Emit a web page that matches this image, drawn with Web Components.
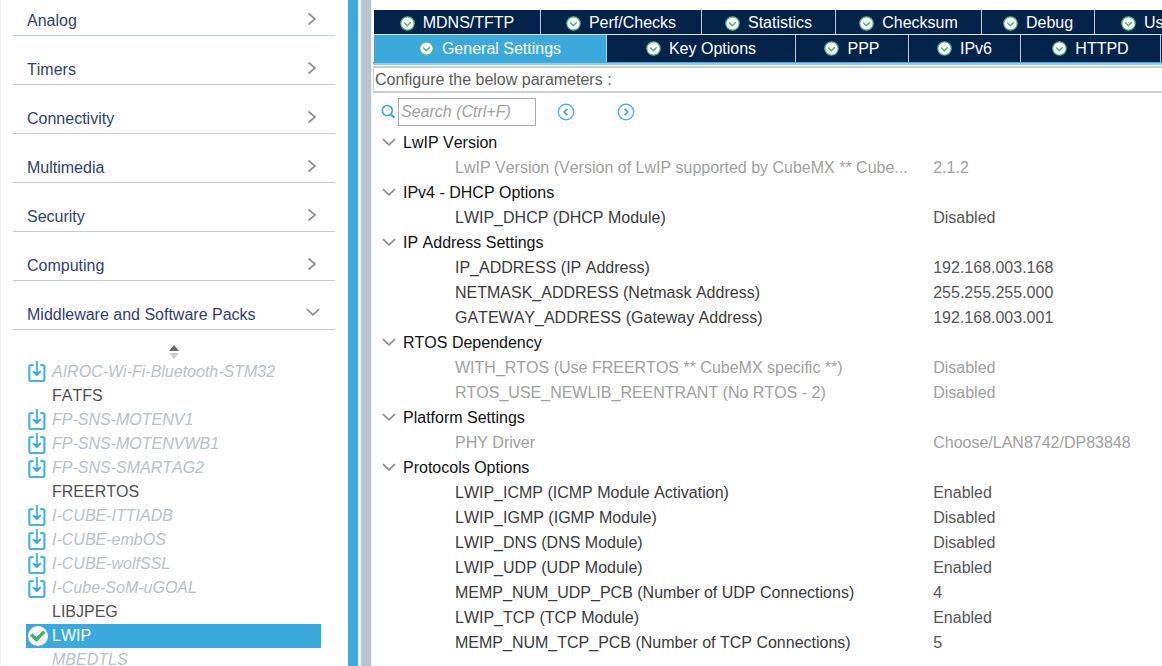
<!DOCTYPE html>
<html lang="en">
<head>
<meta charset="utf-8">
<title>LWIP configuration</title>
<style>
  html, body { margin: 0; height: 100%; }
  body { background: #fff; font: 16px/20px "Liberation Sans", Arial, sans-serif; font-kerning: none; overflow: hidden; }
</style>
</head>
<body>
<mx-workbench>
  <mx-sidebar slot="sidebar">
    <mx-category>Analog</mx-category>
    <mx-category>Timers</mx-category>
    <mx-category>Connectivity</mx-category>
    <mx-category>Multimedia</mx-category>
    <mx-category>Security</mx-category>
    <mx-category>Computing</mx-category>
    <mx-category open>Middleware and Software Packs</mx-category>
    <mx-pack-list slot="packs">
      <mx-pack state="install">AIROC-Wi-Fi-Bluetooth-STM32</mx-pack>
      <mx-pack>FATFS</mx-pack>
      <mx-pack state="install">FP-SNS-MOTENV1</mx-pack>
      <mx-pack state="install">FP-SNS-MOTENVWB1</mx-pack>
      <mx-pack state="install">FP-SNS-SMARTAG2</mx-pack>
      <mx-pack>FREERTOS</mx-pack>
      <mx-pack state="install">I-CUBE-ITTIADB</mx-pack>
      <mx-pack state="install">I-CUBE-embOS</mx-pack>
      <mx-pack state="install">I-CUBE-wolfSSL</mx-pack>
      <mx-pack state="install">I-Cube-SoM-uGOAL</mx-pack>
      <mx-pack>LIBJPEG</mx-pack>
      <mx-pack state="selected">LWIP</mx-pack>
      <mx-pack state="unavailable">MBEDTLS</mx-pack>
    </mx-pack-list>
  </mx-sidebar>

  <mx-tabs>
    <mx-tab slot="back">MDNS/TFTP</mx-tab>
    <mx-tab slot="back">Perf/Checks</mx-tab>
    <mx-tab slot="back">Statistics</mx-tab>
    <mx-tab slot="back">Checksum</mx-tab>
    <mx-tab slot="back">Debug</mx-tab>
    <mx-tab slot="back" clipped>Us</mx-tab>
    <mx-tab slot="front" active>General Settings</mx-tab>
    <mx-tab slot="front">Key Options</mx-tab>
    <mx-tab slot="front">PPP</mx-tab>
    <mx-tab slot="front">IPv6</mx-tab>
    <mx-tab slot="front">HTTPD</mx-tab>
  </mx-tabs>
  <mx-caption>Configure the below parameters :</mx-caption>
  <mx-search></mx-search>
  <mx-parameters></mx-parameters>
</mx-workbench>

<script>
const ICONS = {
  right: `<svg width="10" height="14" viewBox="0 0 10 14"><path d="M1.5 1.5 8 7 1.5 12.5" fill="none" stroke="#8f8f8f" stroke-width="1.7"/></svg>`,
  down: `<svg width="14" height="9" viewBox="0 0 14 9"><path d="M1 1.2 7 6.8 13 1.2" fill="none" stroke="#8f8f8f" stroke-width="1.7"/></svg>`,
  install: `<svg width="18" height="22" viewBox="0 0 18 22"><path d="M5.5 4.2H3Q1.3 4.2 1.3 5.9V18.3Q1.3 20 3 20H14.7Q16.4 20 16.4 18.3V5.9Q16.4 4.2 14.7 4.2H12.2" fill="none" stroke="#4bb3df" stroke-width="2.2"/><path d="M8.8 0V14" fill="none" stroke="#5cbbe3" stroke-width="2.2"/><path d="M4.6 9.6 8.8 11.4 13 9.6V11L8.8 15.4 4.6 11Z" fill="#35a6d9"/></svg>`,
  selected: `<svg width="20" height="20" viewBox="0 0 20 20"><circle cx="10" cy="10" r="10" fill="#fff"/><path d="M3.2 8.6 8.4 13.6 16.2 5.6" fill="none" stroke="#45aa6a" stroke-width="3.4"/></svg>`,
  check: `<svg width="15" height="15" viewBox="0 0 15 15"><circle cx="7.5" cy="7.5" r="6.7" fill="#fff" stroke="#4fb477" stroke-width="1.2"/><path d="M4.2 6.5 7.3 9.7 10.8 6.3" fill="none" stroke="#4fb477" stroke-width="1.6"/></svg>`,
  sort: `<svg width="12" height="14" viewBox="0 0 12 14"><path d="M6 0 11 6H1Z" fill="#6a6a6a"/><path d="M1 8H11L6 14Z" fill="#d0d0d0"/></svg>`,
  search: `<svg width="15" height="15" viewBox="0 0 15 15"><circle cx="6.3" cy="6.5" r="5" fill="none" stroke="#3ba9dc" stroke-width="1.7"/><path d="M9.8 10.4 13.4 13.7" stroke="#3ba9dc" stroke-width="2.2"/></svg>`,
  previous: `<svg width="18" height="18" viewBox="0 0 18 18"><circle cx="9" cy="9" r="7.7" fill="none" stroke="#4eb4e2" stroke-width="1.4"/><path d="M10.4 5.8 7 9 10.4 12.2" fill="none" stroke="#3ba9dc" stroke-width="1.6"/></svg>`,
  next: `<svg width="18" height="18" viewBox="0 0 18 18"><circle cx="9" cy="9" r="7.7" fill="none" stroke="#4eb4e2" stroke-width="1.4"/><path d="M7.6 5.8 11 9 7.6 12.2" fill="none" stroke="#3ba9dc" stroke-width="1.6"/></svg>`
};

const BASE = `<style>
  :host, * { box-sizing: border-box; }
  svg { display: block; flex: none; }
  button { font: inherit; color: inherit; font-kerning: none; background: none; border: 0; padding: 0; margin: 0; text-align: left; }
</style>`;

class MxElement extends HTMLElement {
  constructor() {
    super();
    this.attachShadow({ mode: "open" });
  }
  connectedCallback() {
    this.shadowRoot.innerHTML = BASE + this.view();
  }
}

customElements.define("mx-workbench", class extends MxElement {
  view() {
    return `<style>
      :host { display: grid; grid-template-columns: 348px 10px 3px 10px minmax(0, 1fr); height: 100vh; overflow: hidden; }
      aside, main { min-width: 0; min-height: 0; overflow: hidden; }
      aside { border-left: 1px solid #f0f3f5; }
      .accent { background: #3ba9dc; }
      .gap { background: #f3f3f3; }
      .divider { background: #b9c5cb; }
      main { border-left: 1px solid #eef1f2; padding: 10px 0 0 1px; }
    </style>
    <aside><slot name="sidebar"></slot></aside>
    <div class="accent"></div><div class="gap"></div><div class="divider"></div>
    <main><slot></slot></main>`;
  }
});

customElements.define("mx-sidebar", class extends MxElement {
  view() {
    return `<style>
      :host { display: block; }
      nav { display: grid; gap: 13px; padding: 0 13px 0 12px; }
    </style>
    <nav aria-label="Categories"><slot></slot></nav>
    <slot name="packs"></slot>`;
  }
});

customElements.define("mx-category", class extends MxElement {
  view() {
    const open = this.hasAttribute("open");
    return `<style>
      :host { display: block; color: #2f3f6d; }
      button { display: flex; align-items: center; justify-content: space-between; width: 100%; height: 36px; padding: 6px 18px 0 14px; border-bottom: 1px solid #bfccd8; }
      .icon { display: grid; place-items: center; width: 10px; height: 24px; padding-bottom: 4px; }
      :host([open]) .icon { width: 14px; }
      :host([open]) button { padding-right: 15px; }
    </style>
    <button type="button" aria-expanded="${open}"><span><slot></slot></span><span class="icon">${open ? ICONS.down : ICONS.right}</span></button>`;
  }
});

customElements.define("mx-pack-list", class extends MxElement {
  view() {
    return `<style>
      :host { display: block; padding: 13px 27px 0 25px; }
      .sort { display: grid; place-items: center; width: 100%; height: 17px; }
    </style>
    <button class="sort" type="button" aria-label="Sort packs">${ICONS.sort}</button>
    <slot></slot>`;
  }
});

customElements.define("mx-pack", class extends MxElement {
  view() {
    return `<style>
      :host { display: block; color: #505050; }
      :host([state="install"]), :host([state="unavailable"]) { color: #b7c1c8; font-style: italic; }
      :host([state="selected"]) { background: #3ba9dc; color: #fff; }
      button { display: grid; grid-template-columns: 24px minmax(0, 1fr); align-items: center; width: 100%; height: 24px; padding-left: 2px; white-space: nowrap; }
    </style>
    <button type="button"><span>${ICONS[this.getAttribute("state")] || ""}</span><span><slot></slot></span></button>`;
  }
});

customElements.define("mx-tabs", class extends MxElement {
  view() {
    return `<style>
      :host { display: block; border-bottom: 2px solid #8fd0f0; }
      .row { display: grid; margin-left: 1px; background: #03234b; }
      .back { grid-template-columns: 167fr 161fr 134fr 146fr 113fr 67fr; grid-auto-rows: 24px; border-bottom: 1px solid #dfe4ea; }
      .front { grid-template-columns: 233fr 189fr 113fr 112fr 140fr 1fr; grid-auto-rows: 27px; }
      .line { height: 1px; background: #3ba9dc; }
    </style>
    <div role="tablist">
      <div class="row back"><slot name="back"></slot></div>
      <div class="row front"><slot name="front"></slot></div>
    </div>
    <div class="line"></div>`;
  }
});

customElements.define("mx-tab", class extends MxElement {
  view() {
    return `<style>
      :host { display: block; min-width: 0; overflow: hidden; color: #fff; border-right: 1px solid #c3cad4; }
      :host([active]) { background: #3ba9dc; }
      :host([clipped]) { border-right: 0; }
      button { display: flex; align-items: center; justify-content: center; gap: 8px; width: 100%; height: 100%; white-space: nowrap; }
      :host([slot="back"]) button { padding-top: 2px; }
      :host([clipped]) button { justify-content: flex-start; padding-left: 26px; }
    </style>
    <button type="button" role="tab" aria-selected="${this.hasAttribute("active")}">${ICONS.check}<span><slot></slot></span></button>`;
  }
});

customElements.define("mx-caption", class extends MxElement {
  view() {
    return `<style>
      :host { display: block; margin-top: 1px; height: 27px; padding: 2px 1px; border: 2px solid #cbd0d4; border-right: 0; border-left-width: 1px; color: #5a5a5a; }
    </style><slot></slot>`;
  }
});

customElements.define("mx-search", class extends MxElement {
  view() {
    return `<style>
      :host { display: flex; align-items: center; height: 37px; padding-left: 8px; }
      label { margin-right: 2px; }
      input { width: 138px; height: 28px; margin: 0 21px 0 0; padding: 0 2px; border: 1px solid #a9b0b4; border-radius: 0; background: #fff; color: #333; font: inherit; font-kerning: none; }
      input::placeholder { color: #a0a0a0; font-style: italic; opacity: 1; }
      button { margin-right: 42px; }
    </style>
    <label for="find" aria-label="Search">${ICONS.search}</label>
    <input id="find" type="text" placeholder="Search (Ctrl+F)">
    <button type="button" aria-label="Previous match">${ICONS.previous}</button>
    <button type="button" aria-label="Next match">${ICONS.next}</button>`;
  }
});

const PARAMETERS = [
  ["LwIP Version", [["LwIP Version (Version of LwIP supported by CubeMX ** Cube...", "2.1.2", true]]],
  ["IPv4 - DHCP Options", [["LWIP_DHCP (DHCP Module)", "Disabled"]]],
  ["IP Address Settings", [
    ["IP_ADDRESS (IP Address)", "192.168.003.168"],
    ["NETMASK_ADDRESS (Netmask Address)", "255.255.255.000"],
    ["GATEWAY_ADDRESS (Gateway Address)", "192.168.003.001"]]],
  ["RTOS Dependency", [
    ["WITH_RTOS (Use FREERTOS ** CubeMX specific **)", "Disabled", true],
    ["RTOS_USE_NEWLIB_REENTRANT (No RTOS - 2)", "Disabled", true]]],
  ["Platform Settings", [["PHY Driver", "Choose/LAN8742/DP83848", true]]],
  ["Protocols Options", [
    ["LWIP_ICMP (ICMP Module Activation)", "Enabled"],
    ["LWIP_IGMP (IGMP Module)", "Disabled"],
    ["LWIP_DNS (DNS Module)", "Disabled"],
    ["LWIP_UDP (UDP Module)", "Enabled"],
    ["MEMP_NUM_UDP_PCB (Number of UDP Connections)", "4"],
    ["LWIP_TCP (TCP Module)", "Enabled"],
    ["MEMP_NUM_TCP_PCB (Number of TCP Connections)", "5"]]]
];

customElements.define("mx-parameters", class extends MxElement {
  view() {
    const groups = PARAMETERS.map(([title, rows]) => `<tbody>
      <tr><th colspan="2" scope="rowgroup"><button type="button" aria-expanded="true">${ICONS.down}<span>${title}</span></button></th></tr>
      ${rows.map(([name, value, locked]) => `<tr${locked ? ' class="locked"' : ""}><td class="name">${name}</td><td class="value">${value}</td></tr>`).join("")}
    </tbody>`).join("");
    return `<style>
      :host { display: block; }
      table { width: 100%; table-layout: fixed; border-collapse: collapse; }
      .names { width: 71%; }
      th, td { height: 25px; padding: 0; font-weight: normal; text-align: left; white-space: nowrap; }
      button { display: flex; align-items: center; gap: 7px; height: 25px; padding-left: 9px; color: #111; }
      .name { padding-left: 82px; color: #3a3a3a; }
      .value { color: #555; }
      .locked td { color: #a0a0a0; }
    </style>
    <table><colgroup><col class="names"><col></colgroup>${groups}</table>`;
  }
});
</script>
</body>
</html>
